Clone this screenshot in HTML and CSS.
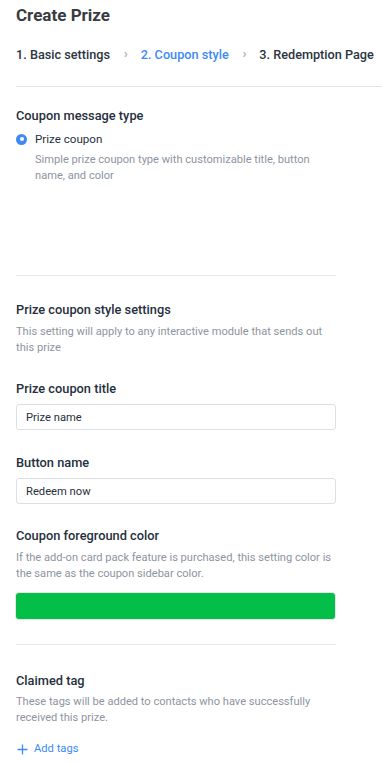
FILE: index.html
```html
<!DOCTYPE html>
<html lang="en">
<head>
    <meta charset="UTF-8">
    <meta name="viewport" content="width=device-width, initial-scale=1.0">
    <title>Create Prize</title>
    <link rel="stylesheet" href="styles.css">
</head>
<body>
    <div class="page">
        <div class="header">
            <h1 class="title">Create Prize</h1>
            <div class="steps">
                <span class="step">1. Basic settings</span>
                <span class="step-arrow">&rsaquo;</span>
                <span class="step active">2. Coupon style</span>
                <span class="step-arrow">&rsaquo;</span>
                <span class="step">3. Redemption Page</span>
            </div>
        </div>

        <div class="section type-section">
            <div class="label">Coupon message type</div>
            <label class="radio-row">
                <span class="radio"></span>
                <span>Prize coupon</span>
            </label>
            <p class="desc radio-desc">Simple prize coupon type with customizable title, button name, and color</p>
        </div>

        <div class="section">
            <div class="label">Prize coupon style settings</div>
            <p class="desc">This setting will apply to any interactive module that sends out this prize</p>

            <div class="field">
                <div class="label">Prize coupon title</div>
                <input class="text-input" type="text" value="Prize name">
            </div>

            <div class="field">
                <div class="label">Button name</div>
                <input class="text-input" type="text" value="Redeem now">
            </div>

            <div class="field color-field">
                <div class="label">Coupon foreground color</div>
                <p class="desc">If the add-on card pack feature is purchased, this setting color is the same as the coupon sidebar color.</p>
                <div class="color-bar"></div>
            </div>
        </div>

        <div class="section last">
            <div class="label">Claimed tag</div>
            <p class="desc">These tags will be added to contacts who have successfully received this prize.</p>
            <a class="add-tags" href="#">
                <svg width="11" height="11" viewBox="0 0 11 11"><path d="M5.5 0.5v10M0.5 5.5h10" stroke="#3d8af7" stroke-width="1.3" fill="none"/></svg>
                Add tags
            </a>
        </div>
    </div>
</body>
</html>
```

FILE: styles.css
```css
body {
    margin: 0;
    font-family: Roboto, "Liberation Sans", Arial, sans-serif;
    background: #fff;
    color: #262f3d;
}

.page {
    padding: 4px 0 0 16px;
}

.header {
    border-bottom: 1px solid #e4e6ea;
    padding-bottom: 22px;
}

.title {
    margin: 0;
    font-size: 17px;
    line-height: 22px;
    font-weight: 700;
    color: #383b40;
}

.steps {
    display: flex;
    align-items: center;
    margin-top: 18px;
    height: 20px;
    font-size: 12.7px;
    font-weight: 500;
    white-space: nowrap;
}

.step {
    color: #2b3442;
}

.step.active {
    color: #3d8af7;
}

.step-arrow {
    color: #9aa1ab;
    font-size: 12px;
    margin: 0 13px 0 14px;
}

.section {
    width: 320px;
    border-bottom: 1px solid #e4e6ea;
    padding-top: 18px;
    padding-bottom: 25px;
}

.type-section {
    height: 189px;
    box-sizing: border-box;
    padding-top: 20px;
}

.label {
    font-size: 12.8px;
    font-weight: 500;
    line-height: 18px;
    color: #262f3d;
}

.radio-row {
    display: flex;
    align-items: center;
    gap: 8px;
    margin-top: 5px;
    font-size: 11.6px;
    line-height: 18px;
    color: #262f3d;
}

.radio {
    width: 11px;
    height: 11px;
    border-radius: 50%;
    background: #3d8af7;
    position: relative;
}

.radio::after {
    content: "";
    position: absolute;
    left: 3.5px;
    top: 3.5px;
    width: 4px;
    height: 4px;
    border-radius: 50%;
    background: #fff;
}

.desc {
    margin: 5px 0 0;
    font-size: 11.1px;
    line-height: 16px;
    color: #8d94a0;
}

.radio-desc {
    margin-top: 4px;
    padding-left: 19px;
}

.section + .section {
    padding-top: 25px;
}

.field {
    margin-top: 24px;
}

.field + .field {
    margin-top: 24px;
}

.field.color-field {
    margin-top: 23px;
}

.text-input {
    display: block;
    box-sizing: border-box;
    width: 320px;
    height: 26px;
    margin-top: 6px;
    padding: 0 9px;
    border: 1px solid #dcdfe4;
    border-radius: 3px;
    font-family: inherit;
    font-size: 11.2px;
    color: #262f3d;
}

.color-bar {
    margin-top: 11px;
    width: 319px;
    height: 26px;
    border-radius: 3px;
    background: #03bf47;
    box-shadow: 0 0 0 1px #e2e5e9;
}

.section.last {
    border-bottom: none;
    padding-top: 27px;
}

.last .desc {
    margin-top: 4px;
}

.add-tags {
    display: inline-flex;
    align-items: center;
    gap: 6px;
    margin-top: 14px;
    padding-left: 1px;
    font-size: 11.2px;
    line-height: 18px;
    color: #3d8af7;
    text-decoration: none;
}
```
